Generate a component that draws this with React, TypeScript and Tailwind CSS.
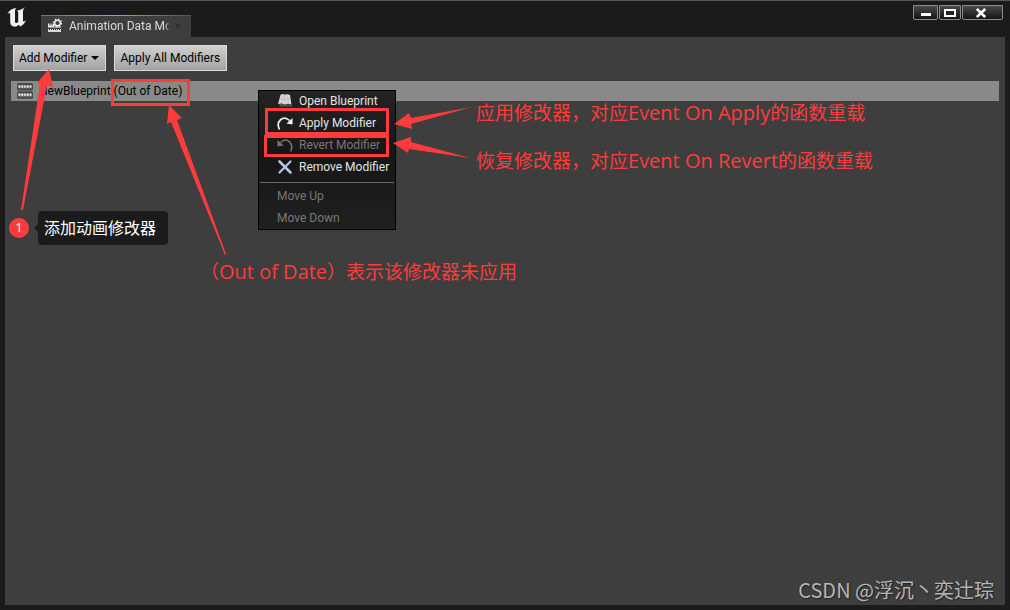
import React from "react";

type MenuEntry = {
  label: string;
  icon?: React.ReactNode;
  disabled?: boolean;
};

const UnrealLogo = () => (
  <svg viewBox="0 0 20 22" className="h-[22px] w-5" fill="#f0f0f0">
    <path d="M0.500 7 C2 3.500 4.500 1.500 9.500 1 C8.300 2 8 2.800 8 4 V14.500 C8 15.800 9 16.300 10.200 15.800 L11.200 15 V5.500 C11.200 4.500 10.700 4 9.700 3.700 C12.500 3.200 15.500 2 18 0.300 C16.500 2 16 3 16 4.500 V13.500 C16 14.800 17 14.800 19 13.200 C17.800 16.500 15.500 18.500 13.200 19.500 L11.600 17.800 C10.300 19.300 8.500 20 6.800 19.600 C4.500 19 3.200 17.500 3.200 15 V7 C3.200 5.500 2 5.700 0.500 7 Z" />
  </svg>
);

const TabIcon = () => (
  <svg viewBox="0 0 16 16" className="h-4 w-4 shrink-0" fill="none">
    <path d="M1 5.500 h1.500 v2 h1 v-2 h1 v2 h1 v-2 h1.500 v3 h7 v1 H1 Z" fill="#e6e6e6" />
    <path d="M1 11 h1 v1 h1 v-1 h1 v1 h1 v-1 h1 v1 h1 v-1 h1 v1 h1 v-1 h1 v1 h1 v-1 h1 v1 h1 v-1 h1 v3 H1 Z" fill="#d8d8d8" />
    <circle cx="10.500" cy="5" r="2.800" fill="#3e3e3e" stroke="#f0f0f0" strokeWidth="1.400" />
    <circle cx="10.500" cy="5" r="4" stroke="#f0f0f0" strokeWidth="1.200" strokeDasharray="1.500 1.640" />
  </svg>
);

const FilmIcon = () => (
  <svg viewBox="0 0 16 16" className="h-4 w-4 shrink-0">
    <rect x="0" y="0" width="16" height="7.600" rx="1.500" fill="#484848" />
    <rect x="0" y="8.200" width="16" height="7.600" rx="1.500" fill="#484848" />
    <path d="M1.500 3.800 H14.500 M1.500 12 H14.500" stroke="#8c8c8c" strokeWidth="3" />
    <path d="M1.500 3.500 H14.500 M1.500 11.700 H14.500" stroke="#f0f0f0" strokeWidth="2.200" strokeDasharray="1.500 1.350" />
  </svg>
);

const BookIcon = () => (
  <svg viewBox="0 0 16 16" className="h-4 w-4">
    <path d="M2 11 L15 11.500 V13.500 H3 Z" fill="#555" />
    <path d="M3.500 2 Q5.500 0.300 7.500 1.700 Q10 0.500 13 2 L14.500 11.500 Q11 10.200 8 11.500 Q4.500 9.800 1 11 Z" fill="#dadada" />
    <path d="M7.500 1.700 L8 11 M5.500 1.500 L4.500 10 M10.300 1.500 L11.300 10 M3 6 H13.300" stroke="#aaa" strokeWidth="0.600" />
  </svg>
);

const ApplyIcon = () => (
  <svg viewBox="0 0 16 16" className="h-4 w-4" fill="none">
    <path d="M2.500 14.500 C-1.500 6.500 6 -0.500 12.500 5.500" stroke="#f2f2f2" strokeWidth="1.700" />
    <path d="M15.500 3 V9.500 L9.500 8.500 Z" fill="#f2f2f2" />
  </svg>
);

const RevertIcon = () => (
  <svg viewBox="0 0 16 16" className="h-4 w-4" fill="none">
    <path d="M13.500 14.500 C17.500 6.500 10 -0.500 3.500 5.500" stroke="#777" strokeWidth="1.500" />
    <path d="M0.500 3 V9.500 L6.500 8.500 Z" fill="#777" />
  </svg>
);

const RemoveIcon = () => (
  <svg viewBox="0 0 16 16" className="h-4 w-4" fill="none" stroke="#b4c6e4" strokeLinecap="round">
    <path d="M2.500 2.500 L13.500 13.500" strokeWidth="2.600" />
    <path d="M13.500 2.500 L2.500 13.500" strokeWidth="2.200" />
  </svg>
);

const modifierEntries: MenuEntry[] = [
  { label: "Open Blueprint", icon: <BookIcon /> },
  { label: "Apply Modifier", icon: <ApplyIcon /> },
  { label: "Revert Modifier", icon: <RevertIcon />, disabled: true },
  { label: "Remove Modifier", icon: <RemoveIcon /> },
];

const orderEntries: MenuEntry[] = [
  { label: "Move Up", disabled: true },
  { label: "Move Down", disabled: true },
];

const MenuItem = ({ label, icon, disabled }: MenuEntry) => (
  <button
    role="menuitem"
    disabled={disabled}
    className="flex h-[18px] items-center gap-[6px] whitespace-nowrap pl-[18px] text-left text-[#e4e4e4] disabled:text-[#777]"
  >
    {icon}
    {label}
  </button>
);

const ContextMenu = () => (
  <div
    role="menu"
    className="absolute left-[258px] top-[90px] flex w-[138px] flex-col border border-black bg-linear-to-b from-[#232323] via-[#161616] to-[#202020] pb-[2px] pt-px"
  >
    <div className="flex flex-col gap-1">
      {modifierEntries.map((entry) => (
        <MenuItem key={entry.label} {...entry} />
      ))}
    </div>
    <hr className="mx-px mb-1 mt-[6px] border-[#6a6a6a]" />
    <div className="flex flex-col gap-1">
      {orderEntries.map((entry) => (
        <MenuItem key={entry.label} {...entry} />
      ))}
    </div>
  </div>
);

const windowButton =
  "flex h-[15px] items-center justify-center rounded-b-xs border border-[#8b8b8b] bg-linear-to-b from-[#4a4a4a] to-[#151515]";

const TitleBar = () => (
  <header className="flex h-[37px] shrink-0 items-start border-t border-[#555] px-[7px]">
    <div className="pt-[6px]">
      <UnrealLogo />
    </div>
    <div className="ml-[14px] mt-[14px] flex h-[22px] w-[150px] flex-col rounded-t-xs bg-[#3e3e3e]">
      <div className="h-px shrink-0 bg-linear-to-r from-[#8a7520] via-[#c9a91c] to-[#5f5322]" />
      <div className="flex flex-1 items-center pb-px pl-[6px]">
        <TabIcon />
        <span className="ml-[6px] w-[101px] overflow-hidden whitespace-nowrap mask-r-from-95% text-[#d8d8d8]">
          Animation Data Modifiers
        </span>
        <button aria-label="Close tab" className="ml-[5px]">
          <svg viewBox="0 0 6 6" className="h-[6px] w-[6px]" stroke="#252525" strokeWidth="1">
            <path d="M0.500 0.500 L5.500 5.500 M5.500 0.500 L0.500 5.500" />
          </svg>
        </button>
      </div>
    </div>
    <div className="ml-auto mt-1 flex gap-px">
      <button aria-label="Minimize" className={`${windowButton} w-[25px]`}>
        <span className="mt-1 h-[3px] w-[10px] bg-white" />
      </button>
      <button aria-label="Maximize" className={`${windowButton} w-[22px]`}>
        <span className="h-2 w-3 border-2 border-white bg-[#222]" />
      </button>
      <button aria-label="Close" className={`${windowButton} w-[41px]`}>
        <svg viewBox="0 0 10 10" className="mr-1 h-[10px] w-[10px]" stroke="#fff" strokeWidth="2.600">
          <path d="M0.800 1 L9.200 9 M9.200 1 L0.800 9" />
        </svg>
      </button>
    </div>
  </header>
);

const toolButton =
  "flex h-[26px] items-center gap-1 border border-[#dadada] bg-linear-to-b from-[#d0d0d0] to-[#a2a2a2] pl-[5px] pr-[6px] text-black";

// Red tapered arrows and frames drawn over the window
const Marks = () => (
  <svg width="480" height="270" className="pointer-events-none absolute left-0 top-0" fill="#ff3b3b">
    <path d="M49 69 L53 87 L47 85 L23 210 L21 210 L40 84 L37 83 Z" />
    <path d="M169 105 L182 118 L177 120 L226 254 L225 255 L171 122 L167 124 Z" />
    <path d="M394 124 L409 113 L411 118 L472 107 L411 124 L412 129 Z" />
    <path d="M393 143 L411 137 L411 142 L470 158 L409 149 L408 153 Z" />
    <g fill="none" stroke="#ff3b3b" strokeWidth="3">
      <rect x="112.500" y="80.500" width="76" height="24" />
      <rect x="266.500" y="109.500" width="121" height="24" />
      <rect x="265.500" y="136.500" width="122" height="19" />
    </g>
  </svg>
);

const noteText =
  "absolute whitespace-nowrap font-['Open_Sans','Noto_Sans_CJK_SC',sans-serif] text-[19px] leading-6 text-[#ff3b3b]";

const Notes = () => (
  <>
    <p className={`${noteText} left-[476px] top-[101px]`}>
      应用修改器，对应<span className="text-xl leading-6">Event On Apply</span>的函数重载
    </p>
    <p className={`${noteText} left-[476px] top-[149px]`}>
      恢复修改器，对应<span className="text-xl leading-6">Event On Revert</span>的函数重载
    </p>
    <p className={`${noteText} left-[200px] top-[260px]`}>
      （<span className="text-xl leading-6">Out of Date</span>）表示该修改器未应用
    </p>
    <div className="absolute left-[9px] top-[211px] flex items-center font-['Open_Sans','Noto_Sans_CJK_SC',sans-serif] text-white">
      <span className="flex h-5 w-5 items-center justify-center rounded-full bg-[#ff3b3b] text-[13px]">1</span>
      <span className="ml-[5px] border-y-4 border-r-4 border-y-transparent border-r-[#1b1b1b]" />
      <p className="flex h-[34px] w-[130px] items-center whitespace-nowrap rounded-sm bg-[#1b1b1b] pl-[6px] text-base">
        添加动画修改器
      </p>
    </div>
  </>
);

const App = () => {
  return (
    <div className="relative flex min-h-screen flex-col overflow-hidden bg-[#1b1b1b] font-['Roboto',sans-serif] text-xs">
      <TitleBar />
      <main className="mx-[5px] mb-[5px] flex-1 bg-[#3e3e3e] px-[6px] pt-2">
        <div className="flex gap-2 pl-[2px]">
          <button className={toolButton}>
            Add Modifier
            <svg viewBox="0 0 8 4" className="h-1 w-2">
              <path d="M0 0 H8 L4 4 Z" />
            </svg>
          </button>
          <button className={toolButton}>Apply All Modifiers</button>
        </div>
        <ul className="mt-[10px]">
          <li className="flex h-5 items-center bg-[#898989] pl-[6px] text-black">
            <FilmIcon />
            <span className="ml-[6px]">NewBlueprint (Out of Date)</span>
          </li>
        </ul>
      </main>
      <ContextMenu />
      <Marks />
      <Notes />
      <p className="absolute bottom-[6px] right-4 font-['Noto_Sans_CJK_SC',sans-serif] text-xl leading-7 text-[#b5b5b5] text-shadow-[1px_1px_1px_#222]">
        CSDN @浮沉丶奕辻琮
      </p>
    </div>
  );
};

export default App;
